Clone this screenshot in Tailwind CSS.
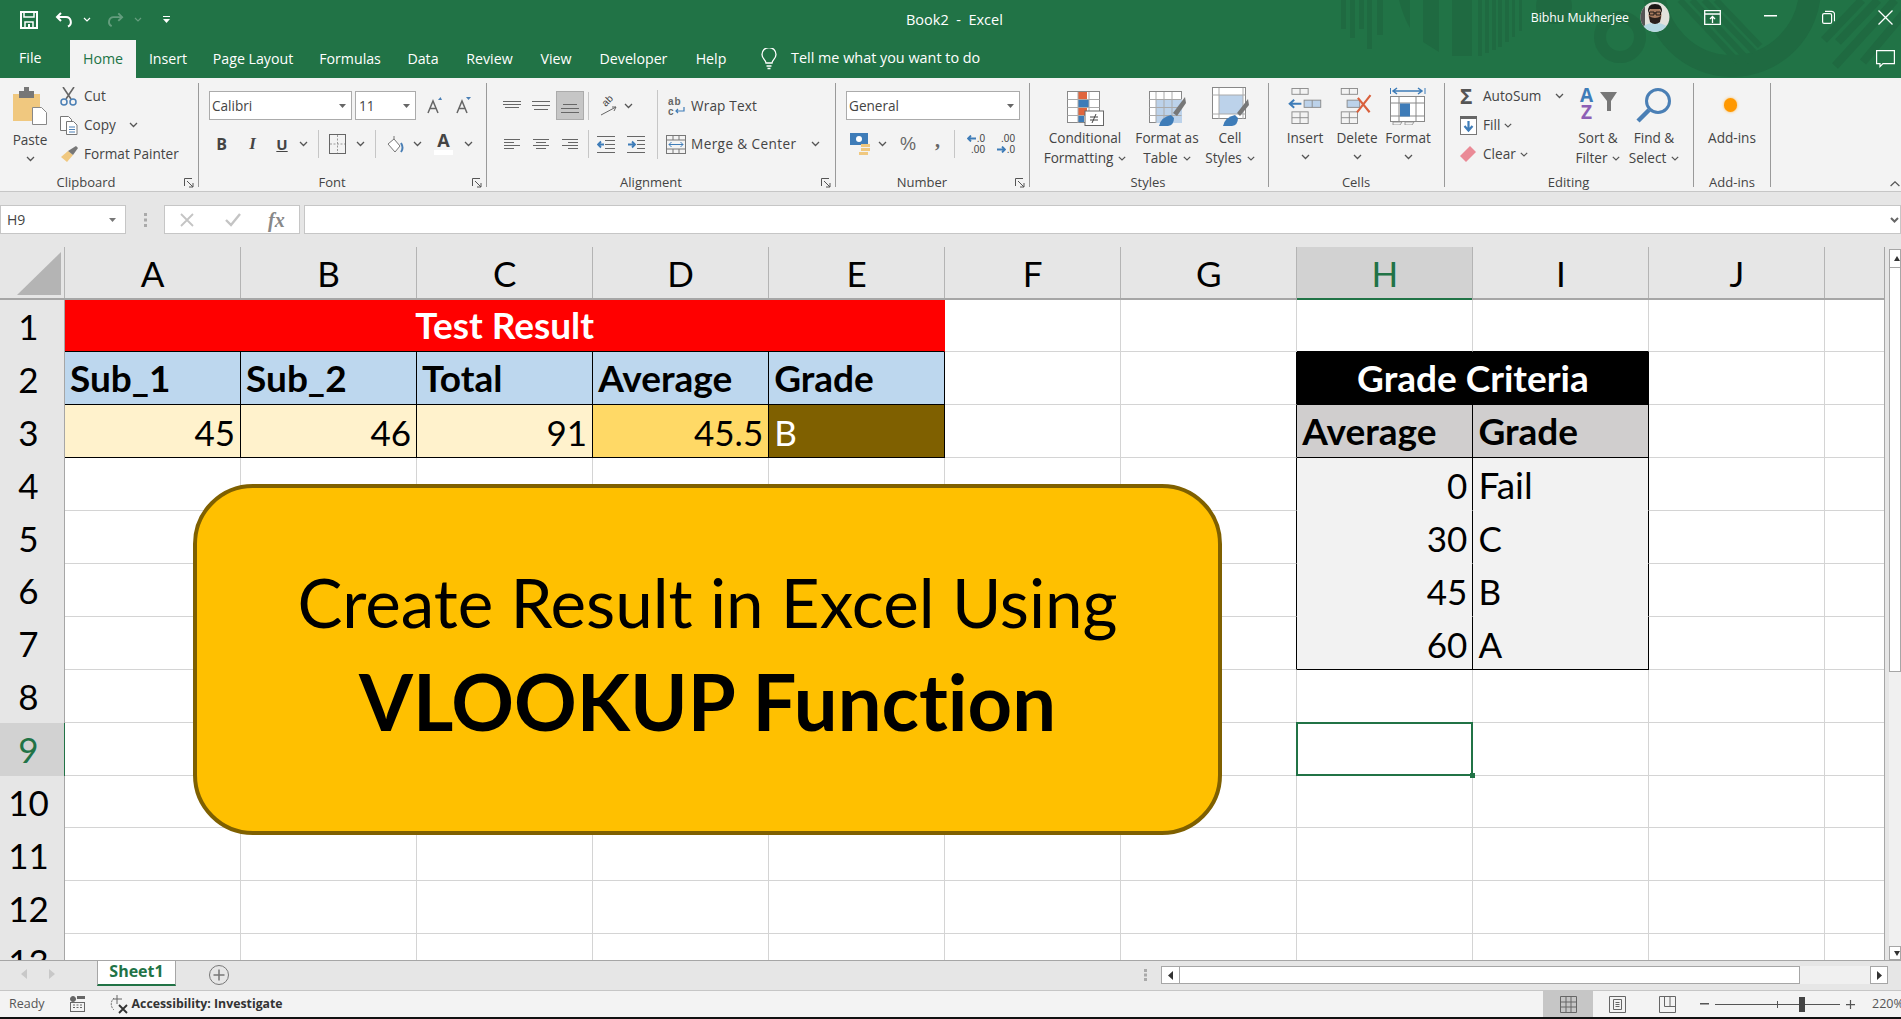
<!DOCTYPE html>
<html lang="en">
<head>
  <meta charset="UTF-8">
  <title>Book2 - Excel</title>
  <script src="https://cdn.jsdelivr.net/npm/@tailwindcss/browser@4"></script>
</head>
<body class="w-[1901px] h-[1019px] overflow-hidden bg-[#111] font-['Open_Sans',sans-serif] text-[#444]">

  <!-- Title bar + tabs -->
  <header class="relative h-[78px] bg-[#217346] text-white overflow-hidden">
    <svg class="absolute left-0 top-0" width="1901" height="78" fill="#1f6a41">
      <path d="M1341 0h5v29h-5zM1350 0h5v38h-5zM1359 0h5v29h-5zM1367 0h5v49h-5zM1377 0h6v35h-6zM1399 0h11v28q-7-12-11-28zM1423 0h16v52l-16-10zM1452 0h20v56h-20zM1478 0h4v56h-4zM1485 0h4v53h-4zM1492 0h4v50h-4zM1498 0h4v47h-4zM1505 0h4v42h-4zM1512 0h3v37h-3zM1519 0h3v31h-3z"/>
      <circle cx="1554" cy="6" r="18"/>
      <circle cx="1620" cy="37" r="20" fill="none" stroke="#1f6a41" stroke-width="12"/>
      <circle cx="1732" cy="-12" r="78" fill="none" stroke="#1f6a41" stroke-width="22"/>
      <path d="M1680 0l58 62M1692 0l58 62M1704 0l50 52M1716 0l44 46" stroke="#1f6a41" stroke-width="6" fill="none"/>
      <path d="M1862 0l-38 40M1878 0l-40 42M1895 0l-60 66M1905 12l-42 50" stroke="#1f6a41" stroke-width="8" fill="none"/>
    </svg>

    <div class="relative flex items-center h-[40px]">
      <div class="flex items-center w-[906px]">
        <svg class="ml-[20px]" width="18" height="18" viewBox="0 0 18 18" fill="none" stroke="#fff" stroke-width="2"><path d="M1 1h16v16H1z"/><path d="M4 1v5h10V1" stroke-width="1.5"/><path d="M5 17v-6h8v6" stroke-width="1.5"/><path d="M9 13v4" stroke-width="2"/></svg>
        <svg class="ml-[17px]" width="19" height="16" viewBox="0 0 19 16" fill="none" stroke="#fff" stroke-width="2"><path d="M6 1L2 5l4 4"/><path d="M2 5h9a5 5 0 0 1 2 9.500"/></svg>
        <svg class="ml-[9px]" width="8" height="6" viewBox="0 0 8 6" fill="none" stroke="#fff" stroke-width="1.200"><path d="M1 1l3 3 3-3"/></svg>
        <svg class="ml-[15px] opacity-30" width="18" height="16" viewBox="0 0 19 16" fill="none" stroke="#fff" stroke-width="2"><path d="M13 1l4 4-4 4"/><path d="M17 5H8a5 5 0 0 0-2 9.500"/></svg>
        <svg class="ml-[10px] opacity-30" width="8" height="6" viewBox="0 0 8 6" fill="none" stroke="#fff" stroke-width="1.200"><path d="M1 1l3 3 3-3"/></svg>
        <svg class="ml-[21px]" width="7" height="8" viewBox="0 0 7 8" fill="#fff"><path d="M0 0h7v1H0zM0 3h7L3.500 7z"/></svg>
      </div>
      <span class="text-[14.5px] whitespace-pre">Book2  -  Excel</span>
      <span class="ml-auto text-[12.300px] mr-[11px] -mt-[3px]">Bibhu Mukherjee</span>
      <svg class="-mt-[6px] mr-[34px]" width="30" height="30" viewBox="0 0 30 30">
        <clipPath id="av"><ellipse cx="15" cy="15" rx="14.500" ry="15"/></clipPath>
        <g clip-path="url(#av)">
          <rect width="30" height="30" fill="#e2e2dc"/>
          <rect width="5" height="30" fill="#555"/>
          <path d="M0 30q2-9 15-9t15 9z" fill="#b5d8e2"/>
          <ellipse cx="15" cy="13" rx="6.500" ry="8.500" fill="#a87a5e"/>
          <path d="M8 11q-1-9 7-9t7 9l-2-4H10z" fill="#1d1715"/>
          <path d="M9 14q6 4 12 0l-1 6q-5 4-10 0z" fill="#2a201c"/>
          <path d="M9.500 10h4.500v3h-4.500zM16 10h4.500v3H16zM14 11h2" fill="none" stroke="#111" stroke-width=".9"/>
        </g>
      </svg>
      <svg class="-mt-[6px] mr-[43px]" width="17" height="15" viewBox="0 0 17 15" fill="none" stroke="#fff" stroke-width="1.300"><path d="M.7.700h15.600v13.600H.7zM.7 4h15.600"/><path d="M8.500 13V6.500M6 9l2.500-2.500L11 9"/></svg>
      <svg class="-mt-[9px] mr-[45px]" width="13" height="2" fill="#fff"><rect width="13" height="1.500"/></svg>
      <svg class="-mt-[6px] mr-[43px]" width="13" height="14" viewBox="0 0 13 14" fill="none" stroke="#fff" stroke-width="1.200"><rect x=".6" y="3.600" width="9" height="9.800" rx="1.500"/><path d="M3 1.300h6.500a3 3 0 0 1 3 3v7"/></svg>
      <svg class="-mt-[6px] mr-[8px]" width="15" height="15" viewBox="0 0 15 15" fill="none" stroke="#fff" stroke-width="1.300"><path d="M.5.500l14 14M14.500.500l-14 14"/></svg>
    </div>

    <nav class="relative flex items-center h-[38px] text-[14.2px]">
      <a class="w-[70px] pl-[19px] -mt-[3px]">File</a>
      <a class="w-[66px] h-full flex items-center justify-center bg-[#f3f3f3] text-[#217346]">Home</a>
      <a class="w-[64px] text-center">Insert</a>
      <a class="w-[106px] text-center">Page Layout</a>
      <a class="w-[88px] text-center">Formulas</a>
      <a class="w-[58px] text-center">Data</a>
      <a class="w-[75px] text-center">Review</a>
      <a class="w-[58px] text-center">View</a>
      <a class="w-[97px] text-center">Developer</a>
      <a class="w-[58px] text-center">Help</a>
      <svg class="ml-[21px]" width="16" height="22" viewBox="0 0 16 22" fill="none" stroke="#fff" stroke-width="1.300"><path d="M5 15c0-3-4-4-4-8.500a7 7 0 0 1 14 0C15 11 11 12 11 15zM5.500 18h5M6.500 20.500h3"/></svg>
      <span class="ml-[14px] -mt-[2px] text-[14.400px]">Tell me what you want to do</span>
      <svg class="absolute left-[1876px] top-[10px]" width="19" height="18" viewBox="0 0 19 18" fill="none" stroke="#fff" stroke-width="1.200"><path d="M.6.600h17.800v13H7l-3 3v-3H.6z"/></svg>
    </nav>
  </header>

  <!-- Ribbon -->
  <section class="relative flex h-[114px] bg-[#f3f3f3] border-b border-[#c6c6c6] pt-[5px] text-[13.6px] leading-[20px]">

    <!-- Clipboard -->
    <div class="relative w-[199px] h-[104px] border-r border-[#9a9a9a] flex">
      <div class="w-[60px] flex flex-col items-center pt-[4px]">
        <svg width="36" height="38" viewBox="0 0 36 38"><rect x="1" y="7" width="27" height="27" fill="#f0c87f"/><path d="M7 4h15v7H7z" fill="#777"/><path d="M12 0h5v5h-5z" fill="#777"/><path d="M20.500 20.500h9l5 5v12h-14z" fill="#fff" stroke="#888"/></svg>
        <span class="mt-[5px]">Paste</span>
        <svg class="mt-[6px]" width="9" height="6" viewBox="0 0 9 6" fill="none" stroke="#555" stroke-width="1.300"><path d="M1 1l3.500 3.500L8 1"/></svg>
      </div>
      <div class="-mt-[1.500px]">
        <div class="flex items-center h-[29px]">
          <svg class="mr-[7px]" width="17" height="19" viewBox="0 0 17 19" fill="none"><path d="M3 0l8 12M14 0L6 12" stroke="#666" stroke-width="1.600"/><circle cx="4" cy="15" r="3" stroke="#4a7fb5" stroke-width="1.500"/><circle cx="13" cy="15" r="3" stroke="#4a7fb5" stroke-width="1.500"/></svg>
          <span>Cut</span>
        </div>
        <div class="flex items-center h-[29px]">
          <svg class="mr-[6px]" width="18" height="19" viewBox="0 0 18 19" fill="#fff" stroke="#777"><path d="M.5.500h8l3 3v11H.5z"/><path d="M6.500 5.500h7l3.500 3.500v9.500H6.500z"/><path d="M9 11h6M9 13.500h6M9 16h6" stroke="#4a7fb5"/></svg>
          <span>Copy</span>
          <svg class="ml-[13px]" width="9" height="6" viewBox="0 0 9 6" fill="none" stroke="#555" stroke-width="1.300"><path d="M1 1l3.500 3.500L8 1"/></svg>
        </div>
        <div class="flex items-center h-[29px]">
          <svg class="mr-[5px] ml-[1px]" width="18" height="16" viewBox="0 0 18 16"><path d="M0 11l6 5 6-7-5-4z" fill="#f0c87f"/><path d="M7 5l5 4 5-7-2-2z" fill="#777"/></svg>
          <span class="whitespace-nowrap">Format Painter</span>
        </div>
      </div>
      <span class="absolute left-0 w-[172px] text-center top-[90px] h-[18px] leading-[18px] text-[13px]">Clipboard</span>
      <svg class="absolute left-[184px] top-[95px]" width="10" height="10" viewBox="0 0 10 10" fill="none" stroke="#555"><path d="M.5 8V.5H8M3 3l6 6M9 5v4H5"/></svg>
    </div>

    <!-- Font -->
    <div class="relative w-[288px] h-[104px] border-r border-[#9a9a9a] pt-[8px]">
      <div class="flex items-center h-[29px] pl-[10px]">
        <div class="w-[143px] h-[29px] border border-[#ababab] bg-white flex items-center pl-[2px] pr-[5px] justify-between">Calibri<svg width="7" height="4" fill="#666"><path d="M0 0h7L3.500 4z"/></svg></div>
        <div class="ml-[3px] w-[61px] h-[29px] border border-[#ababab] bg-white flex items-center pl-[3px] pr-[5px] justify-between">11<svg width="7" height="4" fill="#666"><path d="M0 0h7L3.500 4z"/></svg></div>
        <svg class="ml-[11px]" width="15" height="17" viewBox="0 0 15 17" fill="none"><path d="M1 16L6 4l5 12M3 11.500h6" stroke="#666" stroke-width="1.500"/><path d="M11 3l2.500-3L15 3z" fill="#4a7fb5"/></svg>
        <svg class="ml-[14px]" width="15" height="17" viewBox="0 0 15 17" fill="none"><path d="M1 16L6 4l5 12M3 11.500h6" stroke="#666" stroke-width="1.500"/><path d="M10 0l2.500 3L15 0z" fill="#4a7fb5"/></svg>
      </div>
      <div class="flex items-center h-[29px] mt-[9.500px] pl-[17px]">
        <span class="w-[11px] text-center font-bold text-[16px]">B</span>
        <span class="ml-[20px] w-[11px] text-center font-bold italic text-[17px] font-['Liberation_Serif',serif]">I</span>
        <span class="ml-[18px] w-[12px] text-center font-bold text-[15px] underline">U</span>
        <svg class="ml-[11px]" width="9" height="6" viewBox="0 0 9 6" fill="none" stroke="#555" stroke-width="1.300"><path d="M1 1l3.500 3.500L8 1"/></svg>
        <div class="ml-[10px] w-px h-[28px] bg-[#c6c6c6]"></div>
        <svg class="ml-[10px]" width="17" height="20" viewBox="0 0 17 20" fill="none"><rect x=".5" y=".5" width="16" height="19" stroke="#666"/><path d="M8.500 1v18M1 10h15" stroke="#999" stroke-dasharray="2 1.500"/></svg>
        <svg class="ml-[10px]" width="9" height="6" viewBox="0 0 9 6" fill="none" stroke="#555" stroke-width="1.300"><path d="M1 1l3.500 3.500L8 1"/></svg>
        <div class="ml-[10px] w-px h-[28px] bg-[#c6c6c6]"></div>
        <svg class="ml-[11px]" width="17" height="19" viewBox="0 0 17 19" fill="none"><path d="M1 9l6-5 6 7-5 6z" fill="#fff" stroke="#777"/><path d="M7 4V1" stroke="#777"/><path d="M14 8q3 5 0 9" stroke="#4a7fb5" stroke-width="2"/></svg>
        <svg class="ml-[9px]" width="9" height="6" viewBox="0 0 9 6" fill="none" stroke="#555" stroke-width="1.300"><path d="M1 1l3.500 3.500L8 1"/></svg>
        <div class="ml-[12px] flex flex-col items-center w-[19px] leading-[15px]"><span class="font-bold text-[18px]">A</span><span class="w-[19px] h-[5px] bg-white mt-[2px]"></span></div>
        <svg class="ml-[11px]" width="9" height="6" viewBox="0 0 9 6" fill="none" stroke="#555" stroke-width="1.300"><path d="M1 1l3.500 3.500L8 1"/></svg>
      </div>
      <span class="absolute left-0 w-[266px] text-center top-[90px] h-[18px] leading-[18px] text-[13px]">Font</span>
      <svg class="absolute left-[273px] top-[95px]" width="10" height="10" viewBox="0 0 10 10" fill="none" stroke="#555"><path d="M.5 8V.5H8M3 3l6 6M9 5v4H5"/></svg>
    </div>

    <!-- Alignment -->
    <div class="relative w-[349px] h-[104px] border-r border-[#9a9a9a] flex pt-[8px]">
      <div class="w-[170px] pl-[10px]">
        <div class="flex items-center h-[29px]">
          <div class="w-[29px] flex justify-center"><svg width="18" height="10" viewBox="0 0 18 10" stroke="#666"><path d="M0 .5h18M0 3.500h18M2 6.500h14"/></svg></div>
          <div class="w-[30px] flex justify-center"><svg width="18" height="12" viewBox="0 0 18 12" stroke="#666"><path d="M0 1.500h18M0 5.500h18M2 9.500h14"/></svg></div>
          <div class="w-[28px] h-[29px] bg-[#c6c6c6] border border-[#ababab] flex items-end justify-center pb-[4px]"><svg width="18" height="12" viewBox="0 0 18 12" stroke="#666"><path d="M2 1.500h14M0 5.500h18M0 9.500h18"/></svg></div>
          <div class="ml-[4px] w-px h-[28px] bg-[#c6c6c6]"></div>
          <div class="ml-[9px] w-[20px] h-[20px] flex flex-col items-center">
            <span class="text-[10px] leading-[10px] -rotate-45 font-['Liberation_Sans',sans-serif]">ab</span>
            <svg width="20" height="10" viewBox="0 0 20 10" fill="none" stroke="#666"><path d="M3 9L18 1M18 1h-4M18 1l-2 4"/></svg>
          </div>
          <svg class="ml-[6px]" width="9" height="6" viewBox="0 0 9 6" fill="none" stroke="#555" stroke-width="1.300"><path d="M1 1l3.500 3.500L8 1"/></svg>
        </div>
        <div class="flex items-center h-[29px] mt-[9.500px]">
          <div class="w-[29px] flex justify-center"><svg width="16" height="11" viewBox="0 0 16 11" stroke="#666"><path d="M0 .5h16M0 3.500h10M0 6.500h16M0 9.500h10"/></svg></div>
          <div class="w-[30px] flex justify-center"><svg width="16" height="11" viewBox="0 0 16 11" stroke="#666"><path d="M0 .5h16M3 3.500h10M0 6.500h16M3 9.500h10"/></svg></div>
          <div class="w-[28px] flex justify-center"><svg width="16" height="11" viewBox="0 0 16 11" stroke="#666"><path d="M0 .5h16M6 3.500h10M0 6.500h16M6 9.500h10"/></svg></div>
          <div class="ml-[4px] w-px h-[28px] bg-[#c6c6c6]"></div>
          <svg class="ml-[8px]" width="18" height="17" viewBox="0 0 18 17" fill="none" stroke="#666"><path d="M0 .5h18M8 4.500h10M8 8.500h10M8 12.500h10M0 16.500h18"/><path d="M7 8.500H1M4 5.500l-3 3 3 3" stroke="#3e7cb8" stroke-width="1.800"/></svg>
          <svg class="ml-[12px]" width="18" height="17" viewBox="0 0 18 17" fill="none" stroke="#666"><path d="M0 .5h18M10 4.500h8M10 8.500h8M10 12.500h8M0 16.500h18"/><path d="M1 8.500h7M5 5.500l3 3-3 3" stroke="#3e7cb8" stroke-width="1.800"/></svg>
        </div>
      </div>
      <div class="w-px h-[69px] bg-[#c6c6c6] -mt-[1px]"></div>
      <div class="pl-[10px]">
        <div class="flex items-center h-[29px]">
          <div class="relative w-[17px] h-[20px] mr-[6px] flex flex-col text-[#666] text-[10px] leading-[9px] font-bold font-['Liberation_Sans',sans-serif]">
            <span class="tracking-[1px] mt-[1px]">ab</span><span class="mt-[1px]">c</span>
            <svg class="absolute left-[7px] bottom-[1px]" width="10" height="8" viewBox="0 0 10 8" fill="none" stroke="#3e7cb8" stroke-width="1.200"><path d="M9 0v4H1M3 2L1 4l2 2"/></svg>
          </div>
          <span class="tracking-[0.15px]">Wrap Text</span>
        </div>
        <div class="flex items-center h-[29px] mt-[9.500px]">
          <svg class="mr-[5px] -ml-[2px]" width="20" height="19" viewBox="0 0 20 19" fill="none" stroke="#777"><rect x=".5" y=".5" width="19" height="18"/><path d="M.5 5h19M.5 14h19M7 .5V5M13 .5V5M7 14v5M13 14v5"/><path d="M3 9.500h14M5.500 7l-2.500 2.500L5.500 12M14.500 7l2.500 2.500-2.500 2.500" stroke="#3e7cb8"/></svg>
          <span class="whitespace-nowrap tracking-[0.4px]">Merge &amp; Center</span>
          <svg class="ml-[14px]" width="9" height="6" viewBox="0 0 9 6" fill="none" stroke="#555" stroke-width="1.300"><path d="M1 1l3.500 3.500L8 1"/></svg>
        </div>
      </div>
      <span class="absolute left-0 w-[328px] text-center top-[90px] h-[18px] leading-[18px] text-[13px]">Alignment</span>
      <svg class="absolute left-[334px] top-[95px]" width="10" height="10" viewBox="0 0 10 10" fill="none" stroke="#555"><path d="M.5 8V.5H8M3 3l6 6M9 5v4H5"/></svg>
    </div>

    <!-- Number -->
    <div class="relative w-[194px] h-[104px] border-r border-[#9a9a9a] pt-[8px]">
      <div class="ml-[10px] w-[174px] h-[29px] border border-[#ababab] bg-white flex items-center pl-[2px] pr-[5px] justify-between">General<svg width="7" height="4" fill="#666"><path d="M0 0h7L3.500 4z"/></svg></div>
      <div class="flex items-center h-[29px] mt-[9.500px] pl-[14px]">
        <svg width="21" height="23" viewBox="0 0 21 23"><path d="M0 0h18v12H0z" fill="#3e7cb8"/><circle cx="9" cy="6" r="3" fill="#fff"/><path d="M11 11h9v3h-9zM11 15h9v3h-9zM9 19h9v3H9z" fill="#f0c87f"/></svg>
        <svg class="ml-[7px]" width="9" height="6" viewBox="0 0 9 6" fill="none" stroke="#555" stroke-width="1.300"><path d="M1 1l3.500 3.500L8 1"/></svg>
        <span class="ml-[13px] w-[17px] text-[18px] text-[#666] font-['Liberation_Sans',sans-serif]">%</span>
        <span class="ml-[18px] w-[6px] text-[20px] font-bold text-[#666] font-['Liberation_Serif',serif] -mt-[8px]">,</span>
        <div class="ml-[13px] w-px h-[28px] bg-[#c6c6c6]"></div>
        <div class="ml-[10px] w-[20px] flex flex-col text-[10px] leading-[11px] font-['Liberation_Sans',sans-serif]">
          <div class="flex items-center justify-end"><svg class="mr-[1px]" width="9" height="7" viewBox="0 0 9 7" fill="none" stroke="#3e7cb8" stroke-width="1.800"><path d="M9 3.500H1M4 .5L1 3.500l3 3"/></svg>.0</div>
          <div class="text-right">.00</div>
        </div>
        <div class="ml-[10px] w-[20px] flex flex-col text-[10px] leading-[11px] font-['Liberation_Sans',sans-serif]">
          <div class="text-right">.00</div>
          <div class="flex items-center justify-end"><svg class="mr-[1px]" width="9" height="7" viewBox="0 0 9 7" fill="none" stroke="#3e7cb8" stroke-width="1.800"><path d="M0 3.500h8M5 .5l3 3-3 3"/></svg>.0</div>
        </div>
      </div>
      <span class="absolute left-0 w-[172px] text-center top-[90px] h-[18px] leading-[18px] text-[13px]">Number</span>
      <svg class="absolute left-[179px] top-[95px]" width="10" height="10" viewBox="0 0 10 10" fill="none" stroke="#555"><path d="M.5 8V.5H8M3 3l6 6M9 5v4H5"/></svg>
    </div>

    <!-- Styles -->
    <div class="relative w-[239px] h-[104px] border-r border-[#9a9a9a] flex text-center">
      <div class="w-[110px] flex flex-col items-center">
        <div class="h-[45px] pt-[8px]"><svg width="37" height="35" viewBox="0 0 37 35" fill="none"><rect x=".5" y=".5" width="32" height="31" fill="#fff" stroke="#888"/><path d="M11 1h9v7h-9z" fill="#e0663e"/><path d="M11 9h11v7H11z" fill="#3e7cb8"/><path d="M11 17h9v7h-9z" fill="#e0663e"/><path d="M11 25h6v6h-6z" fill="#3e7cb8"/><path d="M.5 8.500h32M.5 16.500h32M.5 24.500h32M11 1v31M22 1v31" stroke="#aaa"/><rect x="18" y="20" width="18.500" height="14.500" fill="#fff" stroke="#666"/><path d="M23 26h8M23 29h8M29 23l-4 9" stroke="#444"/></svg></div>
        <span class="whitespace-nowrap">Conditional</span>
        <span class="whitespace-nowrap flex items-center">Formatting<svg class="ml-[5px]" width="8" height="5" viewBox="0 0 8 5" fill="none" stroke="#555" stroke-width="1.200"><path d="M.8.800L4 4 7.200.800"/></svg></span>
      </div>
      <div class="w-[54px] flex flex-col items-center">
        <div class="h-[45px] pt-[8px]"><svg width="37" height="35" viewBox="0 0 37 35" fill="none"><rect x=".5" y=".5" width="32" height="31" fill="#fff" stroke="#888"/><rect x="7" y="8" width="26" height="24" fill="#bcd2ea"/><path d="M.5 8.500h32M.5 16.500h32M.5 24.500h32M7 1v31M15 1v31M23 1v31" stroke="#aaa"/><path d="M24 22L36 6l1 6-9 13z" fill="#777"/><path d="M10 35q2-9 12-11l3 3q0 7-6 8z" fill="#3e7cb8"/></svg></div>
        <span class="whitespace-nowrap">Format as</span>
        <span class="whitespace-nowrap flex items-center">Table<svg class="ml-[5px]" width="8" height="5" viewBox="0 0 8 5" fill="none" stroke="#555" stroke-width="1.200"><path d="M.8.800L4 4 7.200.800"/></svg></span>
      </div>
      <div class="w-[72px] flex flex-col items-center">
        <div class="h-[45px] pt-[4px]"><svg width="37" height="39" viewBox="0 0 37 39" fill="none"><rect x=".5" y=".5" width="33" height="31" fill="#fff" stroke="#888"/><rect x="7" y="8" width="24" height="19" fill="#bcd2ea"/><path d="M.5 8h33M.5 27h33M7 1v31M31 1v31" stroke="#aaa"/><path d="M25 26L36 12l1 6-9 11z" fill="#777"/><path d="M11 39q2-9 12-11l3 3q0 7-6 8z" fill="#3e7cb8"/></svg></div>
        <span class="whitespace-nowrap">Cell</span>
        <span class="whitespace-nowrap flex items-center">Styles<svg class="ml-[5px]" width="8" height="5" viewBox="0 0 8 5" fill="none" stroke="#555" stroke-width="1.200"><path d="M.8.800L4 4 7.200.800"/></svg></span>
      </div>
      <span class="absolute left-0 w-[236px] top-[90px] h-[18px] leading-[18px] text-[13px]">Styles</span>
    </div>

    <!-- Cells -->
    <div class="relative w-[176px] h-[104px] border-r border-[#9a9a9a] flex text-center">
      <div class="ml-[11px] w-[50px] flex flex-col items-center">
        <div class="h-[45px] pt-[5px]"><svg width="36" height="36" viewBox="0 0 36 40" fill="none" stroke="#888"><rect x="3.500" y=".5" width="18" height="6.500"/><path d="M12.500 .5v6.500"/><rect x="17" y="13.500" width="18.500" height="8" fill="#bcd2ea"/><path d="M26 13.500v8"/><path d="M14 17.500H1M6 13l-5 4.500L6 22" stroke="#3e7cb8" stroke-width="2.200"/><rect x="3.500" y="26.500" width="18" height="13"/><path d="M3.500 33h18M12.500 27v12"/></svg></div>
        <span>Insert</span>
        <svg class="mt-[6px]" width="9" height="6" viewBox="0 0 9 6" fill="none" stroke="#555" stroke-width="1.300"><path d="M1 1l3.500 3.500L8 1"/></svg>
      </div>
      <div class="w-[54px] flex flex-col items-center">
        <div class="h-[45px] pt-[5px]"><svg width="36" height="36" viewBox="0 0 36 40" fill="none" stroke="#888"><rect x=".5" y=".5" width="18" height="6.500"/><path d="M9.500 .5v6.500"/><rect x="7" y="13.500" width="14" height="8" fill="#bcd2ea"/><rect x=".5" y="26.500" width="18" height="13"/><path d="M.5 33h18M9.500 27v12"/><path d="M19 11l13 16M33 8L18 27" stroke="#d9603c" stroke-width="2.400"/></svg></div>
        <span>Delete</span>
        <svg class="mt-[6px]" width="9" height="6" viewBox="0 0 9 6" fill="none" stroke="#555" stroke-width="1.300"><path d="M1 1l3.500 3.500L8 1"/></svg>
      </div>
      <div class="w-[48px] flex flex-col items-center">
        <div class="h-[45px] pt-[4px]"><svg width="36" height="38" viewBox="0 0 36 38" fill="none" stroke="#888"><path d="M.5 1v6M35 1v6" stroke="#3e7cb8"/><path d="M3 4h29M7 1L3 4l4 3M28 1l4 3-4 3" stroke="#3e7cb8" stroke-width="1.500"/><rect x=".5" y="9.500" width="34" height="25" fill="#fff"/><path d="M.5 16h34M.5 29h34M9 9.500v25M26 9.500v25"/><rect x="10" y="16.500" width="10" height="13" fill="#3e7cb8" stroke="none"/><path d="M3 35h9l-2 3H3zM15 35h9l-2 3h-7z" stroke-width=".8"/></svg></div>
        <span>Format</span>
        <svg class="mt-[6px]" width="9" height="6" viewBox="0 0 9 6" fill="none" stroke="#555" stroke-width="1.300"><path d="M1 1l3.500 3.500L8 1"/></svg>
      </div>
      <span class="absolute left-0 w-[174px] top-[90px] h-[18px] leading-[18px] text-[13px]">Cells</span>
    </div>

    <!-- Editing -->
    <div class="relative w-[249px] h-[104px] border-r border-[#9a9a9a] flex">
      <div class="ml-[15px] w-[110px] -mt-[1.500px]">
        <div class="flex items-center h-[29px]">
          <span class="w-[23px] text-[21px] font-bold text-[#555] leading-none">Σ</span>
          <span>AutoSum</span>
          <svg class="ml-[14px]" width="9" height="6" viewBox="0 0 9 6" fill="none" stroke="#555" stroke-width="1.300"><path d="M1 1l3.500 3.500L8 1"/></svg>
        </div>
        <div class="flex items-center h-[29px]">
          <svg class="mr-[6px]" width="17" height="19" viewBox="0 0 17 19" fill="none"><rect x=".5" y=".5" width="16" height="18" fill="#fff" stroke="#777"/><rect x="0" y="0" width="17" height="3" fill="#666"/><path d="M8.500 5v9M4.500 10l4 4.500 4-4.500" stroke="#3e7cb8" stroke-width="2.200"/></svg>
          <span>Fill</span>
          <svg class="ml-[4px]" width="8" height="5" viewBox="0 0 8 5" fill="none" stroke="#555" stroke-width="1.200"><path d="M.8.800L4 4 7.200.800"/></svg>
        </div>
        <div class="flex items-center h-[29px]">
          <svg class="mr-[7px]" width="16" height="16" viewBox="0 0 16 16"><path d="M0 10l10-10 6 6-10 10z" fill="#ea8a96"/></svg>
          <span>Clear</span>
          <svg class="ml-[4px]" width="8" height="5" viewBox="0 0 8 5" fill="none" stroke="#555" stroke-width="1.200"><path d="M.8.800L4 4 7.200.800"/></svg>
        </div>
      </div>
      <div class="w-[56px] flex flex-col items-center text-center">
        <div class="h-[45px] pt-[4px] flex"><div class="flex flex-col font-bold text-[19px] leading-[17px] w-[15px]"><span class="h-[17px] text-[#3e7cb8]">A</span><span class="h-[17px] text-[#8d5fb5]">Z</span></div><svg class="ml-[6px] mt-[5px]" width="17" height="20" viewBox="0 0 17 20" fill="#777"><path d="M0 0h17L11 9v10H7V9z"/></svg></div>
        <span>Sort &amp;</span>
        <span class="whitespace-nowrap flex items-center">Filter<svg class="ml-[5px]" width="8" height="5" viewBox="0 0 8 5" fill="none" stroke="#555" stroke-width="1.200"><path d="M.8.800L4 4 7.200.800"/></svg></span>
      </div>
      <div class="w-[56px] flex flex-col items-center text-center">
        <div class="h-[45px] pt-[5px]"><svg width="36" height="35" viewBox="0 0 36 35" fill="none" stroke="#4a7fb5"><circle cx="22" cy="13" r="11.500" stroke-width="3"/><path d="M13 22L2 33" stroke-width="4.500"/></svg></div>
        <span>Find &amp;</span>
        <span class="whitespace-nowrap flex items-center">Select<svg class="ml-[5px]" width="8" height="5" viewBox="0 0 8 5" fill="none" stroke="#555" stroke-width="1.200"><path d="M.8.800L4 4 7.200.800"/></svg></span>
      </div>
      <span class="absolute left-0 w-[247px] text-center top-[90px] h-[18px] leading-[18px] text-[13px]">Editing</span>
    </div>

    <!-- Add-ins -->
    <div class="relative w-[77px] h-[104px] border-r border-[#9a9a9a] flex flex-col items-center">
      <div class="h-[45px] pt-[15px] -ml-[4px]"><div class="w-[13px] h-[14px] rounded-full bg-[#ff9800] shadow-[0_0_3px_#ffb84d]"></div></div>
      <span>Add-ins</span>
      <span class="absolute left-0 w-full text-center top-[90px] h-[18px] leading-[18px] text-[13px]">Add-ins</span>
    </div>

    <svg class="absolute left-[1890px] top-[103px]" width="10" height="6" viewBox="0 0 10 6" fill="none" stroke="#555" stroke-width="1.200"><path d="M.6 5L5 .8 9.400 5"/></svg>
  </section>

  <!-- Formula bar -->
  <section class="flex h-[55px] bg-[#e6e6e6] pt-[13px] text-[14px]">
    <div class="w-[126px] h-[29px] bg-white border border-[#c6c6c6] flex items-center justify-between pl-[6px] pr-[9px]">H9<svg width="7" height="4" fill="#777"><path d="M0 0h7L3.500 4z"/></svg></div>
    <svg class="ml-[18px] mt-[8px]" width="3" height="14" fill="#aaa"><rect width="3" height="3"/><rect y="5.500" width="3" height="3"/><rect y="11" width="3" height="3"/></svg>
    <div class="ml-[17px] w-[136px] h-[29px] bg-white border border-[#c6c6c6] flex items-center">
      <svg class="ml-[15px]" width="14" height="14" viewBox="0 0 14 14" fill="none" stroke="#c4c4c4" stroke-width="1.800"><path d="M1 1l12 12M13 1L1 13"/></svg>
      <svg class="ml-[31px]" width="16" height="14" viewBox="0 0 16 14" fill="none" stroke="#c4c4c4" stroke-width="2.400"><path d="M1 7l5 5 9-11"/></svg>
      <span class="ml-[27px] font-['Liberation_Serif',serif] italic font-bold text-[20px] text-[#888]">fx</span>
    </div>
    <div class="ml-[4px] flex-1 h-[29px] bg-white border border-[#c6c6c6] flex items-center justify-end pr-[1px]">
      <svg width="9" height="6" viewBox="0 0 9 6" fill="none" stroke="#666" stroke-width="2"><path d="M1 1l3.500 3.500L8 1"/></svg>
    </div>
  </section>

  <!-- Sheet -->
  <section class="relative flex h-[714px] bg-[#e6e6e6] border-b border-[#a6a6a6] overflow-hidden font-['Lato',sans-serif] text-[35px] leading-[44px] [font-variant-ligatures:none] text-black">
    <div class="w-[1888px] bg-white border-r border-[#a6a6a6] overflow-hidden">
      <div class="grid grid-cols-[65px_repeat(10,176.060px)_62px] grid-rows-[50.500px] h-[52.500px] bg-[#e6e6e6] border-b-2 border-[#a6a6a6] text-center leading-[47px] [&>div]:border-r [&>div]:border-[#b4b4b4] [&>div]:pt-[3px]">
        <div class="relative"><svg class="absolute left-[17px] top-[5px]" width="44" height="43" fill="#b4b4b4"><path d="M44 0v43H0z"/></svg></div>
        <div>A</div><div>B</div><div>C</div><div>D</div><div>E</div><div>F</div><div>G</div>
        <div class="bg-[#d2d2d2] text-[#217346] relative after:absolute after:left-0 after:right-0 after:-bottom-[2px] after:h-[2px] after:bg-[#217346]">H</div>
        <div>I</div><div>J</div><div class="border-r-0!"></div>
      </div>

      <div class="grid grid-cols-[65px_repeat(10,176.060px)_62px] grid-rows-[52.900px] h-[52.900px] [&>div]:border-r [&>div]:border-b [&>div]:border-[#d4d4d4] [&>div]:flex [&>div]:items-center">
        <div class="bg-[#e6e6e6] border-r-[#a6a6a6]! border-b-0! justify-center pr-[7px]">1</div>
        <div class="col-span-5 bg-[#ff0000] text-white font-bold text-[37px] leading-[44px] justify-center border-b-black! border-r-[#ff0000]!">Test Result</div>
        <div></div><div></div><div class="border-b-black!"></div><div class="border-b-black!"></div><div></div><div class="border-r-0!"></div>
      </div>
      <div class="grid grid-cols-[65px_repeat(10,176.060px)_62px] grid-rows-[52.900px] h-[52.900px] [&>div]:border-r [&>div]:border-b [&>div]:border-[#d4d4d4] [&>div]:flex [&>div]:items-center">
        <div class="bg-[#e6e6e6] border-r-[#a6a6a6]! border-b-0! justify-center pr-[7px]">2</div>
        <div class="bg-[#bdd7ee] font-bold text-[37px] leading-[44px] pl-[5px] border-black!">Sub_1</div>
        <div class="bg-[#bdd7ee] font-bold text-[37px] leading-[44px] pl-[5px] border-black!">Sub_2</div>
        <div class="bg-[#bdd7ee] font-bold text-[37px] leading-[44px] pl-[5px] border-black!">Total</div>
        <div class="bg-[#bdd7ee] font-bold text-[37px] leading-[44px] pl-[5px] border-black!">Average</div>
        <div class="bg-[#bdd7ee] font-bold text-[37px] leading-[44px] pl-[5px] border-black!">Grade</div>
        <div></div><div class="border-r-black!"></div>
        <div class="col-span-2 bg-black text-white font-bold text-[37px] leading-[44px] justify-center border-black!">Grade Criteria</div>
        <div></div><div class="border-r-0!"></div>
      </div>
      <div class="grid grid-cols-[65px_repeat(10,176.060px)_62px] grid-rows-[52.900px] h-[52.900px] [&>div]:border-r [&>div]:border-b [&>div]:border-[#d4d4d4] [&>div]:flex [&>div]:items-center">
        <div class="bg-[#e6e6e6] border-r-[#a6a6a6]! border-b-0! justify-center pr-[7px]">3</div>
        <div class="bg-[#fff2cc] justify-end pr-[5px] pt-[2px] border-black!">45</div>
        <div class="bg-[#fff2cc] justify-end pr-[5px] pt-[2px] border-black!">46</div>
        <div class="bg-[#fff2cc] justify-end pr-[5px] pt-[2px] border-black!">91</div>
        <div class="bg-[#ffd966] justify-end pr-[5px] pt-[2px] border-black!">45.5</div>
        <div class="bg-[#7f6000] text-white pl-[5px] pt-[2px] border-black!">B</div>
        <div></div><div class="border-r-black!"></div>
        <div class="bg-[#d0cece] font-bold text-[37px] leading-[44px] pl-[5px] border-black!">Average</div>
        <div class="bg-[#d0cece] font-bold text-[37px] leading-[44px] pl-[5px] border-black!">Grade</div>
        <div></div><div class="border-r-0!"></div>
      </div>
      <div class="grid grid-cols-[65px_repeat(10,176.060px)_62px] grid-rows-[52.900px] h-[52.900px] [&>div]:border-r [&>div]:border-b [&>div]:border-[#d4d4d4] [&>div]:flex [&>div]:items-center">
        <div class="bg-[#e6e6e6] border-r-[#a6a6a6]! border-b-0! justify-center pr-[7px]">4</div>
        <div></div><div></div><div></div><div></div><div></div><div></div><div class="border-r-black!"></div>
        <div class="bg-[#f2f2f2] justify-end pr-[5px] pt-[2px] border-r-black! border-b-[#f2f2f2]!">0</div>
        <div class="bg-[#f2f2f2] pl-[5px] pt-[2px] text-[37px] leading-[44px] border-r-black! border-b-[#f2f2f2]!">Fail</div>
        <div></div><div class="border-r-0!"></div>
      </div>
      <div class="grid grid-cols-[65px_repeat(10,176.060px)_62px] grid-rows-[52.900px] h-[52.900px] [&>div]:border-r [&>div]:border-b [&>div]:border-[#d4d4d4] [&>div]:flex [&>div]:items-center">
        <div class="bg-[#e6e6e6] border-r-[#a6a6a6]! border-b-0! justify-center pr-[7px]">5</div>
        <div></div><div></div><div></div><div></div><div></div><div></div><div class="border-r-black!"></div>
        <div class="bg-[#f2f2f2] justify-end pr-[5px] pt-[2px] border-r-black! border-b-[#f2f2f2]!">30</div>
        <div class="bg-[#f2f2f2] pl-[5px] pt-[2px] border-r-black! border-b-[#f2f2f2]!">C</div>
        <div></div><div class="border-r-0!"></div>
      </div>
      <div class="grid grid-cols-[65px_repeat(10,176.060px)_62px] grid-rows-[52.900px] h-[52.900px] [&>div]:border-r [&>div]:border-b [&>div]:border-[#d4d4d4] [&>div]:flex [&>div]:items-center">
        <div class="bg-[#e6e6e6] border-r-[#a6a6a6]! border-b-0! justify-center pr-[7px]">6</div>
        <div></div><div></div><div></div><div></div><div></div><div></div><div class="border-r-black!"></div>
        <div class="bg-[#f2f2f2] justify-end pr-[5px] pt-[2px] border-r-black! border-b-[#f2f2f2]!">45</div>
        <div class="bg-[#f2f2f2] pl-[5px] pt-[2px] border-r-black! border-b-[#f2f2f2]!">B</div>
        <div></div><div class="border-r-0!"></div>
      </div>
      <div class="grid grid-cols-[65px_repeat(10,176.060px)_62px] grid-rows-[52.900px] h-[52.900px] [&>div]:border-r [&>div]:border-b [&>div]:border-[#d4d4d4] [&>div]:flex [&>div]:items-center">
        <div class="bg-[#e6e6e6] border-r-[#a6a6a6]! border-b-0! justify-center pr-[7px]">7</div>
        <div></div><div></div><div></div><div></div><div></div><div></div><div class="border-r-black!"></div>
        <div class="bg-[#f2f2f2] justify-end pr-[5px] pt-[2px] border-r-black! border-b-black!">60</div>
        <div class="bg-[#f2f2f2] pl-[5px] pt-[2px] border-r-black! border-b-black!">A</div>
        <div></div><div class="border-r-0!"></div>
      </div>
      <div class="grid grid-cols-[65px_repeat(10,176.060px)_62px] grid-rows-[52.900px] h-[52.900px] [&>div]:border-r [&>div]:border-b [&>div]:border-[#d4d4d4] [&>div]:flex [&>div]:items-center">
        <div class="bg-[#e6e6e6] border-r-[#a6a6a6]! border-b-0! justify-center pr-[7px]">8</div>
        <div></div><div></div><div></div><div></div><div></div><div></div><div></div><div></div><div></div><div></div><div class="border-r-0!"></div>
      </div>
      <div class="grid grid-cols-[65px_repeat(10,176.060px)_62px] grid-rows-[52.900px] h-[52.900px] [&>div]:border-r [&>div]:border-b [&>div]:border-[#d4d4d4] [&>div]:flex [&>div]:items-center">
        <div class="bg-[#d2d2d2] text-[#217346] border-r-2 border-r-[#217346]! border-b-0! justify-center pr-[7px]">9</div>
        <div></div><div></div><div></div><div></div><div></div><div></div><div></div>
        <div class="relative"><div class="absolute -left-px -top-px -right-px -bottom-px border-2 border-[#217346]"></div><div class="absolute -right-[3px] -bottom-[3px] w-[5px] h-[5px] bg-[#217346]"></div></div>
        <div></div><div></div><div class="border-r-0!"></div>
      </div>
      <div class="grid grid-cols-[65px_repeat(10,176.060px)_62px] grid-rows-[52.900px] h-[52.900px] [&>div]:border-r [&>div]:border-b [&>div]:border-[#d4d4d4] [&>div]:flex [&>div]:items-center">
        <div class="bg-[#e6e6e6] border-r-[#a6a6a6]! border-b-0! justify-center pr-[7px]">10</div>
        <div></div><div></div><div></div><div></div><div></div><div></div><div></div><div></div><div></div><div></div><div class="border-r-0!"></div>
      </div>
      <div class="grid grid-cols-[65px_repeat(10,176.060px)_62px] grid-rows-[52.900px] h-[52.900px] [&>div]:border-r [&>div]:border-b [&>div]:border-[#d4d4d4] [&>div]:flex [&>div]:items-center">
        <div class="bg-[#e6e6e6] border-r-[#a6a6a6]! border-b-0! justify-center pr-[7px]">11</div>
        <div></div><div></div><div></div><div></div><div></div><div></div><div></div><div></div><div></div><div></div><div class="border-r-0!"></div>
      </div>
      <div class="grid grid-cols-[65px_repeat(10,176.060px)_62px] grid-rows-[52.900px] h-[52.900px] [&>div]:border-r [&>div]:border-b [&>div]:border-[#d4d4d4] [&>div]:flex [&>div]:items-center">
        <div class="bg-[#e6e6e6] border-r-[#a6a6a6]! border-b-0! justify-center pr-[7px]">12</div>
        <div></div><div></div><div></div><div></div><div></div><div></div><div></div><div></div><div></div><div></div><div class="border-r-0!"></div>
      </div>
      <div class="grid grid-cols-[65px_repeat(10,176.060px)_62px] grid-rows-[52.900px] h-[52.900px] [&>div]:border-r [&>div]:border-b [&>div]:border-[#d4d4d4] [&>div]:flex [&>div]:items-center">
        <div class="bg-[#e6e6e6] border-r-[#a6a6a6]! border-b-0! justify-center pr-[7px]">13</div>
        <div></div><div></div><div></div><div></div><div></div><div></div><div></div><div></div><div></div><div></div><div class="border-r-0!"></div>
      </div>
    </div>

    <!-- Vertical scrollbar -->
    <div class="ml-[4px] flex-1 flex flex-col pt-[2px]">
      <div class="h-[19px] bg-white border border-[#a6a6a6] flex items-center pl-[4px]"><svg width="6" height="5" fill="#333"><path d="M3 0l3 5H0z"/></svg></div>
      <div class="h-[404px] bg-white border border-t-0 border-[#a6a6a6]"></div>
      <div class="flex-1 bg-[#f0f0f0]"></div>
      <div class="h-[14px] bg-white border border-[#a6a6a6] flex items-center pl-[4px]"><svg width="6" height="5" fill="#333"><path d="M0 0h6L3 5z"/></svg></div>
    </div>

    <!-- Floating rounded rectangle -->
    <div class="absolute left-[193px] top-[237px] w-[1029px] h-[351px] bg-[#ffc000] border-4 border-[#7f6000] rounded-[60px] flex flex-col items-center">
      <span class="mt-[79px] text-[67.300px] leading-[70px] whitespace-nowrap">Create Result in Excel Using</span>
      <span class="mt-[22px] text-[77.700px] leading-[84px] font-bold whitespace-nowrap">VLOOKUP Function</span>
    </div>
  </section>

  <!-- Sheet tabs + horizontal scrollbar -->
  <section class="flex items-start h-[30px] bg-[#e6e6e6] border-b border-[#c6c6c6]">
    <svg class="ml-[21px] mt-[8px]" width="6" height="10" fill="#c8c8c8"><path d="M6 0v10L0 5z"/></svg>
    <svg class="ml-[22px] mt-[8px]" width="6" height="10" fill="#c8c8c8"><path d="M0 0v10l6-5z"/></svg>
    <div class="ml-[42px] w-[79px] h-[25px] bg-white border-x border-b-2 border-x-[#a6a6a6] border-b-[#217346] text-[#217346] font-bold text-[16px] text-center leading-[21px]">Sheet1</div>
    <svg class="ml-[33px] mt-[4px]" width="20" height="20" viewBox="0 0 20 20" fill="none" stroke="#777"><circle cx="10" cy="10" r="9.500"/><path d="M10 4.500v11M4.500 10h11" stroke-width="1.500"/></svg>
    <svg class="ml-[915px] mt-[8px]" width="3" height="12" fill="#aaa"><rect width="3" height="3"/><rect y="4.500" width="3" height="3"/><rect y="9" width="3" height="3"/></svg>
    <div class="ml-[14px] mt-[5px] w-[19px] h-[18px] bg-white border border-[#a6a6a6] flex items-center justify-center"><svg width="5" height="9" fill="#333"><path d="M5 0v9L0 4.500z"/></svg></div>
    <div class="mt-[5px] w-[620px] h-[18px] bg-white border border-l-0 border-[#a6a6a6]"></div>
    <div class="mt-[5px] w-[70px] h-[18px] bg-[#f0f0f0]"></div>
    <div class="mt-[5px] w-[18px] h-[18px] bg-white border border-[#a6a6a6] flex items-center justify-center"><svg width="5" height="9" fill="#333"><path d="M0 0v9l5-4.500z"/></svg></div>
  </section>

  <!-- Status bar -->
  <footer class="flex items-center h-[26px] bg-[#f3f3f3] text-[12.500px] text-[#555] overflow-hidden">
    <span class="ml-[9px]">Ready</span>
    <svg class="ml-[25px]" width="15" height="16" viewBox="0 0 15 16" fill="none" stroke="#666"><circle cx="3" cy="3" r="2.500" fill="#666"/><path d="M7 1.500h8" stroke-width="3"/><rect x=".5" y="6.500" width="14" height="9"/><path d="M3 9h2M6.500 9h2M10 9h2M3 11.500h2M6.500 11.500h2M10 11.500h2" stroke-width="1"/></svg>
    <svg class="ml-[24px]" width="20" height="20" viewBox="0 0 20 20" fill="none" stroke="#666"><path d="M5 4a8 8 0 0 0 0 12" stroke-dasharray="2 1"/><path d="M8 1v9M4 5h9"/><path d="M10 11l8 8M18 11l-8 8" stroke="#333" stroke-width="1.800"/></svg>
    <span class="ml-[3px] font-bold text-[12.300px] text-[#333] whitespace-nowrap">Accessibility: Investigate</span>
    <div class="ml-auto flex items-center h-full">
      <div class="w-[50px] h-full bg-[#c6c6c6] flex items-center justify-center"><svg width="17" height="17" viewBox="0 0 17 17" fill="none" stroke="#666"><path d="M.5.500h16v16H.5zM6 .5v16M11 .5v16M.5 6h16M.5 11h16"/></svg></div>
      <svg class="ml-[16px]" width="17" height="17" viewBox="0 0 17 17" fill="none" stroke="#666"><path d="M.5.500h16v16H.5z"/><path d="M4.500 3.500h8v10h-8zM6.500 6.500h4M6.500 8.500h4M6.500 10.500h4"/></svg>
      <svg class="ml-[33px]" width="17" height="17" viewBox="0 0 17 17" fill="none" stroke="#666"><path d="M.5.500h16v16H.5zM5.500 .5v10H16M11 .5v10"/></svg>
      <svg class="ml-[24px]" width="9" height="2" fill="#555"><rect width="9" height="1.500"/></svg>
      <svg class="ml-[6px]" width="125" height="15" viewBox="0 0 125 15" fill="#555"><rect y="7" width="125" height="1"/><rect x="62" y="4" width="1" height="7"/><rect x="84" y="0" width="6" height="15" fill="#444"/></svg>
      <svg class="ml-[6px]" width="9" height="9" fill="#555"><path d="M0 4h9v1.200H0zM3.900 0h1.200v9H3.900z"/></svg>
      <span class="ml-[17px] w-[29px] whitespace-nowrap">220%</span>
    </div>
  </footer>
</body>
</html>
